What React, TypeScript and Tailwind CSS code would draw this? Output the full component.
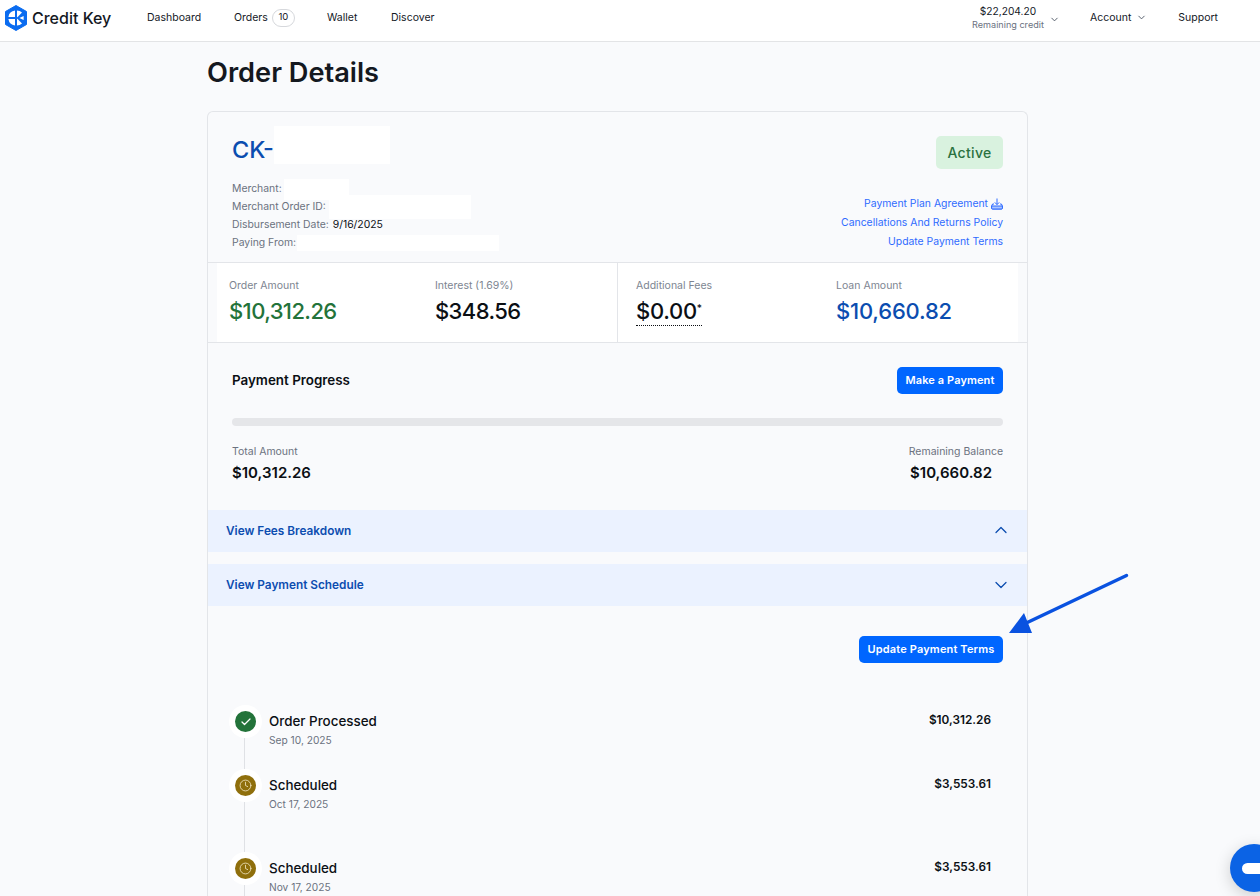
import React from "react";
import { Check, ChevronDown, ChevronUp, Clock } from "lucide-react";

function Logo() {
  return (
    <svg width="22" height="26" viewBox="0 0 22 26" className="shrink-0">
      <path d="M11 0.5 L21.5 6.5 V19.5 L11 25.5 L0.5 19.5 V6.5 Z" fill="#0a6cf0" stroke="#0a6cf0" strokeLinejoin="round" />
      <path d="M10 5.6 A7.6 7.6 0 0 0 3.4 12 H10 Z" fill="#fff" />
      <path d="M10 14 H3.4 A7.6 7.6 0 0 0 10 20.4 Z" fill="#fff" />
      <path d="M12 5.6 A7.6 7.6 0 0 1 17 7.6 L12.4 12.2 L12 12.2 Z" fill="#fff" />
      <path d="M14.4 13 L18.6 11 L18.6 15 Z" fill="#fff" />
      <path d="M12 13.8 L12.4 13.8 L17 18.4 A7.6 7.6 0 0 1 12 20.4 Z" fill="#fff" />
    </svg>
  );
}

function Header() {
  return (
    <header className="flex h-[42px] items-center border-b border-[#e3e4e6] bg-white pb-[6px] pl-[5px] text-[10.5px] text-[#14181f]">
      <Logo />
      <span className="ml-[5px] w-[115px] text-[16px] font-medium text-[#14181f]">Credit Key</span>
      <nav className="flex items-center">
        <a className="w-[87px]">Dashboard</a>
        <a className="flex w-[93px] items-center">
          Orders
          <span className="ml-[4px] flex h-[18px] w-[23px] items-center justify-center rounded-full border border-[#d6d8dc] text-[9.5px]">10</span>
        </a>
        <a className="w-[64px]">Wallet</a>
        <a>Discover</a>
      </nav>
      <div className="ml-auto flex items-center">
        <div className="flex flex-col items-center">
          <span className="text-[10.2px] leading-[14px]">$22,204.20</span>
          <span className="text-[9.1px] leading-[13px] text-[#6b7280]">Remaining credit</span>
        </div>
        <ChevronDown className="ml-[5px] mt-[3px] h-[11px] w-[11px] text-[#4b5563]" />
        <span className="ml-[30px]">Account</span>
        <ChevronDown className="ml-[5px] h-[11px] w-[11px] text-[#4b5563]" />
        <span className="ml-[31px] mr-[42px]">Support</span>
      </div>
    </header>
  );
}

function DownloadIcon() {
  return (
    <svg width="12" height="12" viewBox="0 0 12 12" fill="none" stroke="#2f6bff" strokeWidth="1" className="ml-[3px]">
      <path d="M6 0.5 V6.5 M3.8 4.4 L6 6.6 L8.2 4.4" />
      <path d="M3 6 H1.6 L0.6 8 V10 A1 1 0 0 0 1.6 11 H10.4 A1 1 0 0 0 11.4 10 V8 L10.4 6 H9" />
      <path d="M0.6 8 H11.4 V10 A1 1 0 0 1 10.4 11 H1.6 A1 1 0 0 1 0.6 10 Z" fill="#a9c4ff" />
    </svg>
  );
}

function MetaRow({ label, value, gap, width, height }: { label: string; value?: string; gap?: number; width?: number; height?: number }) {
  return (
    <div className="flex h-[18px] items-center">
      <span className="text-[#6b7280]">{label}</span>
      {value && <span className="ml-[4px] text-[#0b0f14]">{value}</span>}
      {width && <span className="shrink-0 bg-white" style={{ width, height, marginLeft: gap }} />}
    </div>
  );
}

function Stat({ label, value, color, width }: { label: string; value: React.ReactNode; color: string; width: string }) {
  return (
    <div className={width}>
      <div className="text-[10.5px] leading-[16px] text-[#7d8591]">{label}</div>
      <div className={`mt-[2px] text-[22px] font-medium leading-[30px] ${color}`}>{value}</div>
    </div>
  );
}

function TimelineRow({ icon, bg, title, date, amount, height }: { icon: React.ReactNode; bg: string; title: string; date: string; amount: string; height: string }) {
  return (
    <div className={`flex ${height}`}>
      <div className="-ml-[3px] flex w-[33px] shrink-0 flex-col items-center">
        <div className="flex h-[33px] w-[33px] items-center justify-center rounded-full bg-white">
          <div className={`flex h-[21px] w-[21px] items-center justify-center rounded-full ${bg}`}>{icon}</div>
        </div>
        <div className="mr-[2px] w-px flex-1 bg-[#dfe1e5]" />
      </div>
      <div className="ml-[7px] pt-[7px]">
        <div className="text-[13.4px] font-medium leading-[18px] text-[#0b0f14]">{title}</div>
        <div className="mt-[3px] text-[10.2px] leading-[14px] text-[#6b7280]">{date}</div>
      </div>
      <div className="ml-auto mr-[12px] pt-[7px] text-[11.8px] font-semibold leading-[16px] text-[#0b0f14]">{amount}</div>
    </div>
  );
}

export default function App() {
  return (
    <div className="relative h-[896px] overflow-hidden bg-[#f9fafc] font-['Inter',sans-serif]">
      <Header />
      <main className="ml-[207px] w-[821px]">
        <h1 className="mt-[13px] text-[27.2px] font-semibold leading-[36px] text-[#14181f]">Order Details</h1>
        <div className="mt-[20px] rounded-t-[6px] border border-b-0 border-[#e3e5e9]">
          {/* order header */}
          <section className="flex justify-between px-6 pt-[14px]">
            <div>
              <div className="flex h-[38px] items-end text-[23.5px] font-medium leading-[28px] text-[#0b4db0]">
                CK-
                <span className="h-[38px] w-[116px] bg-white" />
              </div>
              <div className="mt-[16px] pb-[10px] text-[10.4px]">
                <MetaRow label="Merchant:" gap={2} width={65} height={21} />
                <MetaRow label="Merchant Order ID:" gap={3} width={142} height={24} />
                <MetaRow label="Disbursement Date:" value="9/16/2025" />
                <MetaRow label="Paying From:" gap={1} width={202} height={16} />
              </div>
            </div>
            <div className="mt-[10px] flex flex-col items-end justify-between pb-[11px]">
              <span className="flex h-[33px] w-[67px] items-center justify-center rounded-[5px] bg-[#d9f2df] text-[14px] font-medium tracking-[0.3px] text-[#2a7140]">Active</span>
              <div className="flex flex-col items-end text-[10.4px] leading-[19px] text-[#2f6bff]">
                <a className="flex items-center">Payment Plan Agreement<DownloadIcon /></a>
                <a>Cancellations And Returns Policy</a>
                <a>Update Payment Terms</a>
              </div>
            </div>
          </section>

          {/* amounts */}
          <section className="border-y border-[#e3e5e9]">
            <div className="mx-[9px] flex h-[79px] bg-white pt-[15px]">
              <div className="flex w-[400px] pl-[12px]">
                <Stat label="Order Amount" value="$10,312.26" color="tracking-[-0.6px] text-[#23733a]" width="w-[206px]" />
                <Stat label="Interest (1.69%)" value="$348.56" color="tracking-[-0.6px] text-[#0b0f14]" width="w-[180px]" />
              </div>
              <div className="-mt-[15px] flex flex-1 border-l border-[#e3e5e9] pl-[18px] pt-[15px]">
                <Stat
                  label="Additional Fees"
                  value={
                    <span className="inline-block border-b border-dotted border-[#0b0f14] leading-[27px]">
                      $0.00<sup className="relative -top-[7px] text-[10px] leading-none">*</sup>
                    </span>
                  }
                  color="tracking-[-0.3px] text-[#0b0f14]"
                  width="w-[200px]"
                />
                <Stat label="Loan Amount" value="$10,660.82" color="tracking-[-0.2px] text-[#0b4db0]" width="w-[170px]" />
              </div>
            </div>
          </section>

          {/* payment progress */}
          <section className="px-6 pt-6">
            <div className="flex h-[27px] items-center justify-between">
              <h2 className="text-[13.4px] font-semibold text-[#0b0f14]">Payment Progress</h2>
              <button className="h-[27px] w-[106px] rounded-[5px] bg-[#0066ff] text-[11px] font-semibold tracking-[0.1px] text-white">Make a Payment</button>
            </div>
            <div className="mt-6 h-2 rounded-full bg-[#e5e6e9]" />
            <div className="mt-[18px] flex justify-between">
              <div>
                <div className="text-[10.5px] leading-[16px] text-[#6b7280]">Total Amount</div>
                <div className="mt-[2px] text-[15px] font-semibold leading-[22px] text-[#0b0f14]">$10,312.26</div>
              </div>
              <div className="flex flex-col items-end">
                <div className="text-[10.5px] leading-[16px] text-[#6b7280]">Remaining Balance</div>
                <div className="mr-[11px] mt-[2px] text-[15px] font-semibold leading-[22px] text-[#0b0f14]">$10,660.82</div>
              </div>
            </div>
          </section>

          {/* accordions */}
          <section className="mt-[26px] flex flex-col gap-3">
            <div className="flex h-[42px] items-center justify-between bg-[#ebf2ff] pl-[18px] pr-[16px] text-[11.8px] font-semibold text-[#0b4db0]">
              <span className="pt-[2px]">View Fees Breakdown</span>
              <ChevronUp className="mb-[2px] h-[20px] w-[20px]" strokeWidth={1.5} />
            </div>
            <div className="flex h-[42px] items-center justify-between bg-[#ebf2ff] pl-[18px] pr-[16px] text-[11.8px] font-semibold text-[#0b4db0]">
              <span className="pt-[2px]">View Payment Schedule</span>
              <ChevronDown className="h-[20px] w-[20px]" strokeWidth={1.5} />
            </div>
          </section>

          {/* schedule */}
          <section className="px-6 pt-[30px]">
            <div className="flex justify-end">
              <button className="h-[27px] w-[144px] rounded-[5px] bg-[#0066ff] text-[11px] font-semibold tracking-[0.15px] text-white">Update Payment Terms</button>
            </div>
            <div className="mt-[42px]">
              <TimelineRow height="h-[64px]" bg="bg-[#23733a]" icon={<Check className="h-[12px] w-[12px] text-white" strokeWidth={2.5} />} title="Order Processed" date="Sep 10, 2025" amount="$10,312.26" />
              <TimelineRow height="h-[83px]" bg="bg-[#8f6f0c]" icon={<Clock className="h-[13px] w-[13px] text-[#f3e8c5]" strokeWidth={1.5} />} title="Scheduled" date="Oct 17, 2025" amount="$3,553.61" />
              <TimelineRow height="h-[100px]" bg="bg-[#8f6f0c]" icon={<Clock className="h-[13px] w-[13px] text-[#f3e8c5]" strokeWidth={1.5} />} title="Scheduled" date="Nov 17, 2025" amount="$3,553.61" />
            </div>
          </section>
        </div>
      </main>

      {/* annotation arrow */}
      <svg className="absolute left-[1000px] top-[565px]" width="140" height="80" viewBox="0 0 140 80">
        <path d="M126.5 10.5 L22 60" stroke="#0a52e0" strokeWidth="3.5" strokeLinecap="round" />
        <path d="M9 68 L24 48 L32 68 Z" fill="#0a52e0" />
      </svg>

      {/* chat bubble */}
      <div className="absolute left-[1230px] top-[844px] flex h-12 w-12 items-center rounded-full bg-[#0b63e5] pl-[12px] shadow-[0_4px_16px_rgba(0,0,0,0.18)]">
        <div className="h-[11px] w-[30px] rounded-full bg-white" />
      </div>
    </div>
  );
}
